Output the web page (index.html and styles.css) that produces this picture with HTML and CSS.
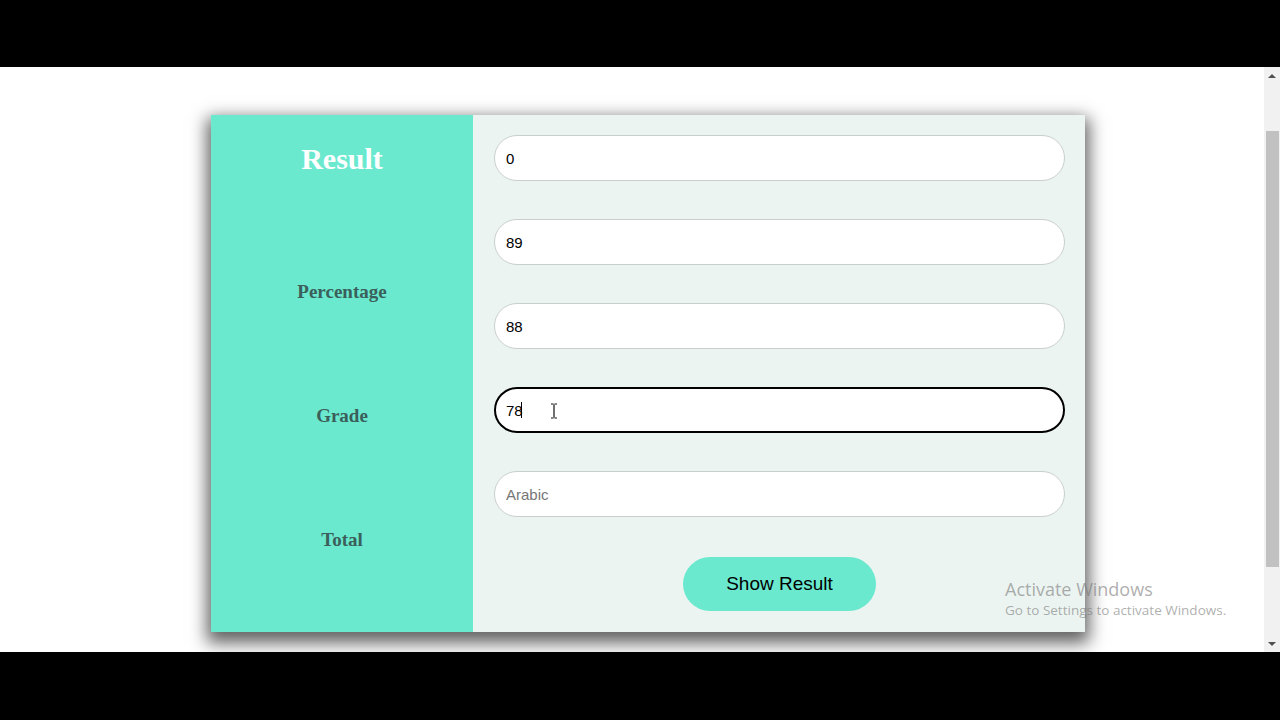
FILE: index.html
```html
<!DOCTYPE html>
<html lang="en">
<head>
<meta charset="utf-8">
<title>Result</title>
<link rel="stylesheet" href="styles.css">
</head>
<body>
<div class="frame">
  <div class="letterbox"></div>
  <div class="viewport">
    <div class="page">
      <div class="card">
        <div class="labels">
          <h1 class="title">Result</h1>
          <div class="label first">Percentage</div>
          <div class="label">Grade</div>
          <div class="label">Total</div>
        </div>
        <div class="form">
          <input class="field" type="text" value="0">
          <input class="field" type="text" value="89">
          <input class="field" type="text" value="88">
          <div class="focus-wrap">
            <input class="field focused" type="text" value="78">
            <span class="caret"></span>
            <svg class="ibeam" width="10" height="16" viewBox="0 0 10 16"><path d="M2 1h2.5M5.5 1H8M5 1.5v13M2 15h2.5M5.5 15H8" stroke="#111" stroke-width="1.2" fill="none"/></svg>
          </div>
          <input class="field" type="text" placeholder="Arabic">
          <div class="actions">
            <button class="btn" type="button">Show Result</button>
          </div>
        </div>
      </div>
      <div class="watermark">
        <div class="wm-title">Activate Windows</div>
        <div class="wm-sub">Go to Settings to activate Windows.</div>
      </div>
    </div>
    <div class="scrollbar">
      <div class="arrow up"></div>
      <div class="track">
        <div class="thumb"></div>
      </div>
      <div class="arrow down"></div>
    </div>
  </div>
  <div class="letterbox bottom"></div>
</div>
</body>
</html>
```

FILE: styles.css
```css
* { box-sizing: border-box; }

html, body {
  margin: 0;
  padding: 0;
  background: #000;
}

.frame {
  width: 1280px;
  height: 720px;
  display: flex;
  flex-direction: column;
}

.letterbox {
  height: 67px;
  background: #000;
}

.letterbox.bottom {
  height: 68px;
}

.viewport {
  height: 585px;
  background: #fff;
  display: flex;
}

.page {
  flex: 1;
  position: relative;
  padding: 48px 0 0 211px;
}

.card {
  position: relative;
  z-index: 1;
  width: 874px;
  height: 517px;
  display: grid;
  grid-template-columns: 262px 1fr;
  box-shadow: 0 7px 16px 4px rgba(0, 0, 0, 0.62);
}

.labels {
  background: #6ae9cf;
  display: flex;
  flex-direction: column;
  align-items: center;
  padding-top: 27px;
  font-family: "Liberation Serif", "Times New Roman", serif;
  font-weight: bold;
}

.title {
  margin: 0;
  font-size: 30px;
  line-height: 34px;
  color: #fff;
  font-weight: bold;
}

.label {
  font-size: 19px;
  line-height: 22px;
  color: #3b5f5a;
  margin-top: 102px;
}

.label.first {
  margin-top: 105px;
}

.form {
  background: #ecf4f1;
  padding: 20px 20px 0 21px;
  display: flex;
  flex-direction: column;
  gap: 38px;
}

.field {
  display: block;
  width: 571px;
  height: 46px;
  border: 1px solid #c9cfcd;
  border-radius: 23px;
  background: #fff;
  padding: 0 0 0 11px;
  font-family: "Liberation Sans", Arial, sans-serif;
  font-size: 15px;
  color: #000;
  outline: none;
}

.field::placeholder {
  color: #767676;
}

.focus-wrap {
  position: relative;
  width: 571px;
}

.field.focused {
  border: 2px solid #000;
  padding-left: 10px;
}

.caret {
  position: absolute;
  left: 27px;
  top: 15px;
  width: 1px;
  height: 16px;
  background: #000;
}

.ibeam {
  position: absolute;
  left: 55px;
  top: 16px;
}

.actions {
  width: 571px;
  display: flex;
  justify-content: center;
  margin-top: 2px;
}

.btn {
  width: 193px;
  height: 54px;
  border: none;
  border-radius: 27px;
  background: #6ae9cf;
  font-family: "Liberation Sans", Arial, sans-serif;
  font-size: 19px;
  color: #000;
}

.watermark {
  position: absolute;
  left: 1005px;
  top: 511px;
  z-index: 2;
  font-family: "Open Sans", "Noto Sans", sans-serif;
  color: rgba(120, 120, 120, 0.6);
  pointer-events: none;
}

.wm-title {
  font-size: 18px;
  line-height: 22px;
}

.wm-sub {
  font-size: 13.5px;
  line-height: 20px;
}

.scrollbar {
  width: 16px;
  background: #f1f1f1;
  display: flex;
  flex-direction: column;
}

.arrow {
  height: 17px;
  display: flex;
  align-items: center;
  justify-content: center;
}

.arrow::before {
  content: "";
  width: 0;
  height: 0;
  border-left: 4px solid transparent;
  border-right: 4px solid transparent;
}

.arrow.up::before {
  border-bottom: 4px solid #505050;
}

.arrow.down::before {
  border-top: 4px solid #505050;
}

.track {
  flex: 1;
  padding: 47px 1px 0 2px;
}

.thumb {
  height: 436px;
  background: #c1c1c1;
}
```
